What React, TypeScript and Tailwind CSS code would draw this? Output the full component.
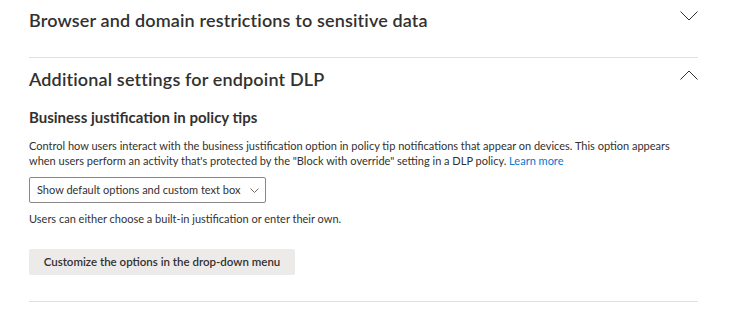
const font = { fontFamily: 'Lato, "Open Sans", sans-serif' };

function Chevron({ up = false, className = "" }: { up?: boolean; className?: string }) {
  return (
    <svg viewBox="0 0 18 10" className={className} fill="none" stroke="currentColor" strokeWidth={1}>
      {up ? <polyline points="0.5,9.5 9,1 17.5,9.5" /> : <polyline points="0.5,0.5 9,9 17.5,0.5" />}
    </svg>
  );
}

export default function App() {
  return (
    <div className="w-[750px] h-[310px] overflow-hidden bg-white text-[#323130]" style={font}>
      <div className="ml-[29px] w-[669px]">
        {/* Collapsed section */}
        <div className="flex items-start justify-between h-[58px] pt-[8px] border-b border-[#e1dfdd]">
          <h2 className="text-[18px] font-semibold leading-[24px] tracking-[0.15px]">
            Browser and domain restrictions to sensitive data
          </h2>
          <Chevron className="w-[18px] h-[10px] mt-[3px] text-[#323130]" />
        </div>

        {/* Expanded section */}
        <div className="pt-[9px]">
          <div className="flex items-start justify-between">
            <h2 className="text-[18px] font-semibold leading-[24px] tracking-[0.15px]">
              Additional settings for endpoint DLP
            </h2>
            <Chevron up className="w-[18px] h-[10px] mt-[3px] text-[#323130]" />
          </div>

          <h3 className="mt-[16px] text-[15px] font-bold leading-[20px]">
            Business justification in policy tips
          </h3>
          <p className="mt-[11px] text-[11px] leading-[15px]">
            Control how users interact with the business justification option in policy tip notifications that appear on devices. This option appears
            <br />
            when users perform an activity that's protected by the "Block with override" setting in a DLP policy.{" "}
            <a className="text-[#0078d4]" href="#">Learn more</a>
          </p>

          <div className="mt-[9px] w-[237px] h-[26px] border border-[#8a8886] rounded-[2px] flex items-center justify-between pl-[7px] pr-[6px] text-[11px]">
            <span className="whitespace-nowrap">Show default options and custom text box</span>
            <svg viewBox="0 0 9 5" className="w-[9px] h-[5px] text-[#605e5c]" fill="none" stroke="currentColor" strokeWidth={0.9}>
              <polyline points="0.5,0.5 4.5,4.5 8.5,0.5" />
            </svg>
          </div>

          <p className="mt-[8px] text-[11px] leading-[15px]">
            Users can either choose a built-in justification or enter their own.
          </p>

          <button className="mt-[23px] flex items-center justify-center w-[266px] h-[26px] bg-[#edebe9] rounded-[2px] text-[11.5px] font-semibold text-[#323130] whitespace-nowrap">
            Customize the options in the drop-down menu
          </button>

          <div className="mt-[26px] border-b border-[#e1dfdd]" />
        </div>
      </div>
    </div>
  );
}
